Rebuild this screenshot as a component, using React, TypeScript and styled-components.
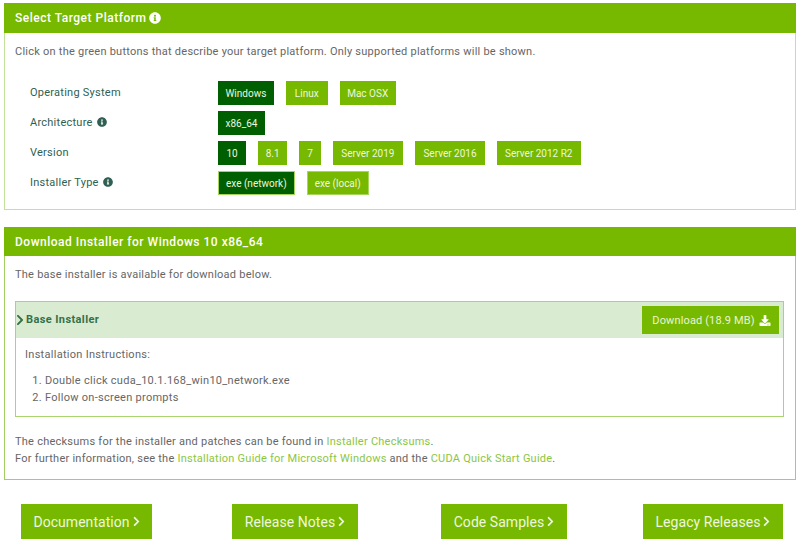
import React from "react";
import styled, { createGlobalStyle } from "styled-components";
import { FaInfoCircle, FaDownload, FaChevronRight } from "react-icons/fa";

const Global = createGlobalStyle`
  html, body { margin: 0; padding: 0; background: #fff; }
  body { font-family: "Roboto", "Liberation Sans", sans-serif; }
`;

const Page = styled.div`
  width: 800px;
  height: 549px;
  overflow: hidden;
  padding: 3px 4px 0;
  box-sizing: border-box;
`;

const Panel = styled.section<{ $height: number; $mt?: number; $edge: string }>`
  height: ${(p) => p.$height}px;
  margin-top: ${(p) => p.$mt ?? 0}px;
  box-sizing: border-box;
  border: 1px solid ${(p) => p.$edge};
  border-top: none;
`;

const PanelHead = styled.h2<{ $height: number }>`
  margin: 0 -1px;
  height: ${(p) => p.$height}px;
  background: #76b900;
  color: #fff;
  font-size: 12px;
  font-weight: 500;
  letter-spacing: 0.5px;
  display: flex;
  align-items: center;
  gap: 3px;
  padding-left: 11px;
  svg { width: 12px; height: 12px; }
`;

const Intro = styled.p<{ $mt: number }>`
  margin: ${(p) => p.$mt}px 0 0 10px;
  font-size: 11px;
  line-height: 16px;
  letter-spacing: 0.24px;
  color: #666;
`;

const Options = styled.div`
  margin: 21px 0 0 25px;
  display: grid;
  grid-template-columns: 188px 1fr;
  grid-auto-rows: 24px;
  row-gap: 6px;
  align-items: center;
`;

const Label = styled.div`
  font-size: 11px;
  letter-spacing: 0.25px;
  color: #2f5f52;
  display: flex;
  align-items: center;
  gap: 4px;
  margin-top: -2px;
  svg { width: 10px; height: 10px; }
`;

const Choices = styled.div`
  display: flex;
  gap: 12px;
`;

const Choice = styled.button<{ $on?: boolean; $boxed?: boolean; $pad: number }>`
  height: 24px;
  box-sizing: border-box;
  padding: 0 ${(p) => p.$pad}px;
  border: none;
  box-shadow: ${(p) => (p.$boxed ? "inset 0 0 0 1px #a6d65c" : "none")};
  background: ${(p) => (p.$on ? "#005f00" : "#76b900")};
  color: #eef7dd;
  font-family: inherit;
  font-size: 10px;
  letter-spacing: 0;
  white-space: nowrap;
`;

const InstallerBox = styled.div`
  margin: 18px 11px 0 10px;
  height: 116px;
  box-sizing: border-box;
  border: 1px solid #a9d46f;
`;

const InstallerHead = styled.div`
  height: 36px;
  background: #d9ecd1;
  display: flex;
  align-items: center;
  justify-content: space-between;
  padding: 0 4px 0 0;
`;

const InstallerName = styled.div`
  display: flex;
  align-items: center;
  gap: 2px;
  margin-top: -1px;
  color: #35704a;
  font-size: 11px;
  font-weight: 700;
  letter-spacing: 0.4px;
  svg { width: 8px; height: 12px; }
`;

const DownloadButton = styled.button`
  width: 137px;
  height: 28px;
  border: none;
  padding: 0 0 0 2px;
  background: #76b900;
  color: #eaf5d6;
  font-family: inherit;
  font-size: 11px;
  letter-spacing: 0.13px;
  display: flex;
  align-items: center;
  justify-content: center;
  gap: 4px;
  svg { width: 12px; height: 11px; color: #fff; }
`;

const InstallerBody = styled.div`
  padding: 8px 0 0 9px;
  font-size: 11px;
  letter-spacing: 0.28px;
  color: #666;
  line-height: 17px;
`;

const Steps = styled.ol`
  margin: 9px 0 0;
  padding: 0 0 0 20px;
`;

const Notes = styled.p`
  margin: 16px 0 0 10px;
  font-size: 11px;
  line-height: 17px;
  letter-spacing: 0.24px;
  color: #666;
`;

const TextLink = styled.a`
  color: #8cc63f;
  text-decoration: none;
`;

const LinkRow = styled.nav`
  margin: 24px 0 0 -4px;
  padding-left: 21px;
  display: grid;
  grid-template-columns: 211px 209px 202px auto;
  justify-items: start;
`;

const BigLink = styled.a<{ $width: number }>`
  width: ${(p) => p.$width}px;
  height: 35px;
  background: #76b900;
  color: #eef7dd;
  font-size: 14px;
  letter-spacing: 0.05px;
  display: flex;
  align-items: center;
  justify-content: center;
  gap: 3px;
  svg { width: 7px; height: 11px; }
`;

const rows = [
  { label: "Operating System", info: false, items: [["Windows", 7.5, true], ["Linux", 9], ["Mac OSX", 7.5]] },
  { label: "Architecture", info: true, items: [["x86_64", 7.5, true]] },
  { label: "Version", info: false, items: [["10", 8.5, true], ["8.1", 7.5], ["7", 8], ["Server 2019", 8.5], ["Server 2016", 8.5], ["Server 2012 R2", 8]] },
  { label: "Installer Type", info: true, items: [["exe (network)", 8, true, true], ["exe (local)", 8, false, true]] },
] as { label: string; info: boolean; items: [string, number, boolean?, boolean?][] }[];

export default function App() {
  return (
    <Page>
      <Global />
      <Panel $height={207} $edge="#c3e19a">
        <PanelHead $height={30}>Select Target Platform <FaInfoCircle /></PanelHead>
        <Intro $mt={11}>Click on the green buttons that describe your target platform. Only supported platforms will be shown.</Intro>
        <Options>
          {rows.map((r) => (
            <React.Fragment key={r.label}>
              <Label>{r.label}{r.info && <FaInfoCircle />}</Label>
              <Choices>
                {r.items.map(([t, pad, on, boxed]) => (
                  <Choice key={t} $pad={pad} $on={on} $boxed={boxed}>{t}</Choice>
                ))}
              </Choices>
            </React.Fragment>
          ))}
        </Options>
      </Panel>
      <Panel $height={253} $mt={17} $edge="#a0cf63">
        <PanelHead $height={29}>Download Installer for Windows 10 x86_64</PanelHead>
        <Intro $mt={11}>The base installer is available for download below.</Intro>
        <InstallerBox>
          <InstallerHead>
            <InstallerName><FaChevronRight />Base Installer</InstallerName>
            <DownloadButton>Download (18.9 MB) <FaDownload /></DownloadButton>
          </InstallerHead>
          <InstallerBody>
            Installation Instructions:
            <Steps>
              <li>Double click cuda_10.1.168_win10_network.exe</li>
              <li>Follow on-screen prompts</li>
            </Steps>
          </InstallerBody>
        </InstallerBox>
        <Notes>
          The checksums for the installer and patches can be found in <TextLink>Installer Checksums</TextLink>.<br />
          For further information, see the <TextLink>Installation Guide for Microsoft Windows</TextLink> and the <TextLink>CUDA Quick Start Guide</TextLink>.
        </Notes>
      </Panel>
      <LinkRow>
        <BigLink $width={131}>Documentation<FaChevronRight /></BigLink>
        <BigLink $width={126}>Release Notes<FaChevronRight /></BigLink>
        <BigLink $width={126}>Code Samples<FaChevronRight /></BigLink>
        <BigLink $width={140}>Legacy Releases<FaChevronRight /></BigLink>
      </LinkRow>
    </Page>
  );
}
